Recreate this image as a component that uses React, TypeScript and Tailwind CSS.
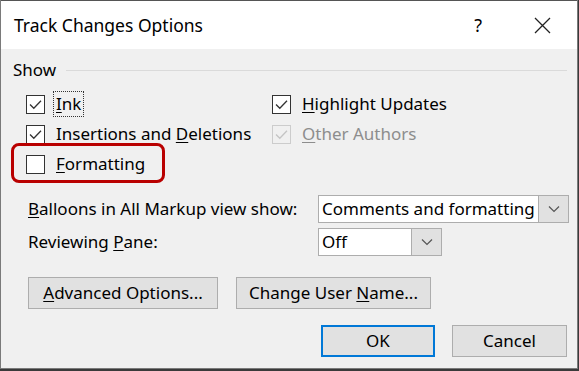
import { type ReactNode } from 'react'

const font = { fontFamily: '"Noto Sans", "Open Sans", sans-serif' }

function Box({ checked, disabled }: { checked?: boolean; disabled?: boolean }) {
  return (
    <span
      className={`flex h-[19px] w-[19px] shrink-0 items-center justify-center border ${
        disabled ? 'border-[#cccccc] bg-[#f0f0f0]' : 'border-[#333333] bg-white'
      }`}
    >
      {checked && (
        <svg width="15" height="15" viewBox="0 0 15 15">
          <path
            d="M2 7.5 L5.8 11.3 L13 3.8"
            fill="none"
            stroke={disabled ? '#c4c4c4' : '#333333'}
            strokeWidth="1.3"
          />
        </svg>
      )}
    </span>
  )
}

function Check({
  checked,
  disabled,
  focus,
  children,
}: {
  checked?: boolean
  disabled?: boolean
  focus?: boolean
  children: ReactNode
}) {
  return (
    <div className="flex h-[30px] items-center">
      <Box checked={checked} disabled={disabled} />
      <span
        className={`ml-[8px] whitespace-nowrap px-[2px] py-[1px] leading-[22px] ${
          focus ? 'border border-dotted border-[#333]' : 'border border-transparent'
        } ${disabled ? 'text-[#8d8d8d]' : 'text-black'}`}
      >
        {children}
      </span>
    </div>
  )
}

function Chevron() {
  return (
    <svg width="12" height="8" viewBox="0 0 12 8">
      <path d="M1 1.5 L6 6.5 L11 1.5" fill="none" stroke="#555" strokeWidth="1.2" />
    </svg>
  )
}

function Combo({ value, width }: { value: string; width: string }) {
  return (
    <div className={`flex h-[28px] shrink-0 ${width} border border-[#adadad] bg-white`}>
      <span className="flex-1 overflow-hidden whitespace-nowrap pl-[3px] leading-[26px] text-black">{value}</span>
      <span className="flex w-[30px] shrink-0 items-center justify-center border-l border-[#adadad] bg-[#e1e1e1]">
        <Chevron />
      </span>
    </div>
  )
}

function Btn({ children, w, primary }: { children: ReactNode; w: string; primary?: boolean }) {
  return (
    <button
      className={`flex h-[32px] ${w} items-center justify-center bg-[#e1e1e1] text-black ${
        primary ? 'border-2 border-[#0078d7]' : 'border border-[#adadad]'
      }`}
    >
      <span className="whitespace-nowrap">{children}</span>
    </button>
  )
}

export default function App() {
  return (
    <div className="h-[371px] w-[579px] overflow-hidden bg-[#3a3a3a] text-[17px]" style={font}>
      <div className="relative flex h-[369px] w-[578px] flex-col border border-t-0 border-[#7a7a7a]">
        {/* title bar */}
        <div className="flex h-[49px] shrink-0 items-center border-t border-[#555] bg-white pl-[13px] pr-[26px]">
          <span className="flex-1 text-[17.5px] text-black">Track Changes Options</span>
          <span className="mr-[52px] text-[18px] text-black">?</span>
          <svg width="17" height="17" viewBox="0 0 17 17">
            <path d="M1 1 L16 16 M16 1 L1 16" stroke="#222" strokeWidth="1.3" />
          </svg>
        </div>

        {/* body */}
        <div className="flex flex-1 flex-col bg-[#f0f0f0] pl-[12px] pr-[10px]">
          <div className="mt-[10px] flex h-[22px] items-center">
            <span className="text-black">Show</span>
            <span className="ml-[10px] h-px flex-1 bg-[#dadada]" />
          </div>

          <div className="ml-[13px] mt-[8px] grid grid-cols-[246px_1fr]">
            <div>
              <Check checked focus>
                <u className="underline-offset-2">I</u>nk
              </Check>
              <Check checked>
                Insertions and <u className="underline-offset-2">D</u>eletions
              </Check>
              <Check>
                <u className="underline-offset-2">F</u>ormatting
              </Check>
            </div>
            <div>
              <Check checked>
                <u className="underline-offset-2">H</u>ighlight Updates
              </Check>
              <Check checked disabled>
                <u className="underline-offset-2">O</u>ther Authors
              </Check>
            </div>
          </div>

          <div className="ml-[15px] mt-[16px] flex flex-col gap-[5px]">
            <div className="flex items-center">
              <span className="w-[290px] shrink-0 whitespace-nowrap text-black">
                <u className="underline-offset-2">B</u>alloons in All Markup view show:
              </span>
              <Combo value="Comments and formatting" width="w-[251px]" />
            </div>
            <div className="flex items-center">
              <span className="w-[290px] shrink-0 whitespace-nowrap text-black">
                Reviewing <u className="underline-offset-2">P</u>ane:
              </span>
              <Combo value="Off" width="w-[124px]" />
            </div>
          </div>

          <div className="ml-[15px] mt-[21px] flex gap-[18px]">
            <Btn w="w-[190px]">
              <u className="underline-offset-2">A</u>dvanced Options...
            </Btn>
            <Btn w="w-[195px]">
              Change User <u className="underline-offset-2">N</u>ame...
            </Btn>
          </div>

          <div className="mt-[16px] flex justify-end gap-[17px]">
            <Btn w="w-[114px]" primary>
              OK
            </Btn>
            <Btn w="w-[115px]">Cancel</Btn>
          </div>
        </div>

        {/* annotation highlight */}
        <div className="pointer-events-none absolute left-[10px] top-[143px] h-[40px] w-[154px] rounded-[8px] border-[3px] border-[#b90000]" />
      </div>
    </div>
  )
}
